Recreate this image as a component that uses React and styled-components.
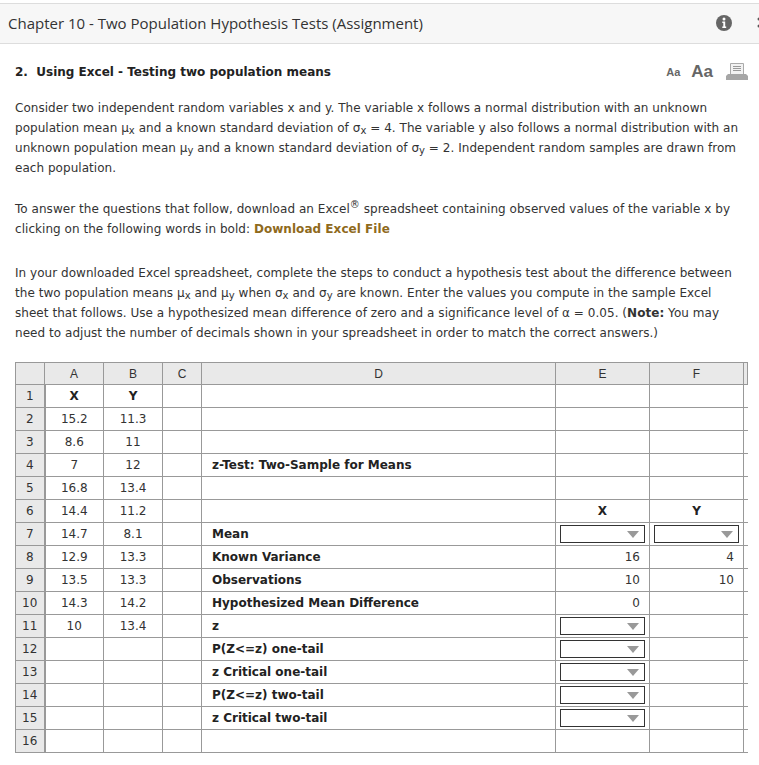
import React from "react";
import styled, { createGlobalStyle } from "styled-components";

const GlobalStyle = createGlobalStyle`
  html, body {
    margin: 0;
    padding: 0;
    background: #ffffff;
  }
  body {
    width: 759px;
    height: 765px;
    overflow: hidden;
    font-family: "DejaVu Sans", Verdana, sans-serif;
    color: #333333;
  }
`;

const Page = styled.div`
  width: 759px;
  padding-top: 3px;
  overflow: hidden;
`;

const TitleBar = styled.header`
  box-sizing: border-box;
  width: 759px;
  height: 41px;
  display: flex;
  align-items: center;
  justify-content: space-between;
  padding: 0 0 2px 8px;
  background: #f7f7f7;
  border-top: 1px solid #dddddd;
  border-bottom: 1px solid #dddddd;
`;

const Title = styled.h1`
  margin: 0;
  font-family: "Open Sans", sans-serif;
  font-size: 15px;
  font-weight: 400;
  color: #333333;
  white-space: nowrap;
`;

const BarTools = styled.div`
  display: flex;
  align-items: center;
  gap: 25px;
  margin-right: -2px;
`;

const Content = styled.main`
  padding: 18px 15px 0;
`;

const QuestionHead = styled.div`
  display: flex;
  align-items: center;
  justify-content: space-between;
  height: 20px;
  margin-bottom: 16px;
`;

const QuestionTitle = styled.h2`
  margin: 0;
  font-size: 12px;
  font-weight: 700;
  color: #222222;
  white-space: pre;
`;

const FontTools = styled.div`
  display: flex;
  align-items: center;
  margin-right: -4px;
  font-weight: 700;
  color: #666666;
`;

const FontSize = styled.span`
  font-family: "Liberation Sans", Arial, sans-serif;
  font-size: ${(p) => p.$size}px;
  margin-right: ${(p) => p.$gap}px;
`;

const Para = styled.p`
  margin: 0 0 ${(p) => p.$after}px;
  font-size: 12px;
  line-height: 20px;
  letter-spacing: 0.04px;
  color: #333333;
  white-space: nowrap;
`;

const Sub = styled.sub`
  font-size: 10px;
  line-height: 0;
  vertical-align: -2px;
`;

const DownloadLink = styled.a`
  font-weight: 700;
  color: #8f6a1c;
`;

const Reg = styled.sup`
  font-size: 10px;
  line-height: 0;
`;

const SheetWrap = styled.div`
  margin-top: 19px;
`;

const Sheet = styled.table`
  table-layout: fixed;
  width: 733px;
  border-collapse: collapse;
  font-size: 12px;
  color: #333333;
`;

const HeadCell = styled.th`
  height: 21px;
  padding: 0;
  font-family: "Liberation Sans", Arial, sans-serif;
  font-size: 12px;
  font-weight: 400;
  text-align: center;
  background: #e9e9e9;
  border: 1px solid #999999;
`;

const RowHead = styled.td`
  height: 22px;
  padding: 0;
  text-align: center;
  background: #e9e9e9;
  border: 1px solid #999999;
  border-right-width: 2px;
`;

const Cell = styled.td`
  height: 22px;
  padding: ${(p) => (p.$align === "left" ? "0 0 0 10px" : p.$align === "right" ? "0 9px 0 0" : "0")};
  text-align: ${(p) => p.$align || "center"};
  font-weight: ${(p) => (p.$bold ? 700 : 400)};
  color: ${(p) => (p.$bold ? "#222222" : "#333333")};
  border: 1px solid #999999;
  white-space: nowrap;
`;

const EdgeCell = styled.td`
  padding: 0;
  border-top: 1px solid #999999;
  border-bottom: 1px solid #999999;
`;

const DropBox = styled.div`
  box-sizing: border-box;
  width: 85px;
  height: 18px;
  margin: 0 0 0 4px;
  display: flex;
  align-items: center;
  justify-content: flex-end;
  padding-right: 5px;
  border: 1px solid #333333;
  background: #ffffff;
`;

const Caret = styled.span`
  width: 0;
  height: 0;
  border-left: 6px solid transparent;
  border-right: 6px solid transparent;
  border-top: 7px solid #999999;
`;

const InfoIcon = () => (
  <svg width="16" height="16" viewBox="0 0 16 16" aria-hidden="true">
    <circle cx="8" cy="8" r="8" fill="#666666" />
    <circle cx="8" cy="4" r="1.5" fill="#ffffff" />
    <path d="M6.3 6.6h2.9v5h1v1.3H6.3v-1.3h1v-3.7h-1z" fill="#ffffff" />
  </svg>
);

const DotsIcon = () => (
  <svg width="4" height="14" viewBox="0 0 4 14" aria-hidden="true">
    <circle cx="2" cy="3" r="1.5" fill="#555555" />
    <circle cx="2" cy="10" r="1.5" fill="#555555" />
  </svg>
);

const PrinterIcon = () => (
  <svg width="22" height="18" viewBox="0 0 22 18" aria-hidden="true">
    <path d="M4.5 .5h13v11h-13z" fill="#f2f2f2" stroke="#aaaaaa" />
    <path d="M7 3.5h8M7 5.5h8M7 7.5h8" stroke="#999999" />
    <path d="M2 11h18l2 2v4H0v-4z" fill="#a6a6a6" />
  </svg>
);

const rows = [
  ["X", "Y", "", "", null, null],
  ["15.2", "11.3"],
  ["8.6", "11"],
  ["7", "12", "", "z-Test: Two-Sample for Means"],
  ["16.8", "13.4"],
  ["14.4", "11.2", "", "", "X", "Y"],
  ["14.7", "8.1", "", "Mean", "drop", "drop"],
  ["12.9", "13.3", "", "Known Variance", "16", "4"],
  ["13.5", "13.3", "", "Observations", "10", "10"],
  ["14.3", "14.2", "", "Hypothesized Mean Difference", "0", ""],
  ["10", "13.4", "", "z", "drop", ""],
  ["", "", "", "P(Z<=z) one-tail", "drop", ""],
  ["", "", "", "z Critical one-tail", "drop", ""],
  ["", "", "", "P(Z<=z) two-tail", "drop", ""],
  ["", "", "", "z Critical two-tail", "drop", ""],
  [],
];

const Dropdown = () => (
  <DropBox>
    <Caret />
  </DropBox>
);

const ResultCell = ({ value, index }) => {
  if (value === "drop") {
    return (
      <Cell>
        <Dropdown />
      </Cell>
    );
  }
  // the header row of the result block is centred and bold, numbers sit on the right
  if (index === 5) return <Cell $bold>{value}</Cell>;
  return <Cell $align="right">{value}</Cell>;
};

export default function App() {
  return (
    <Page>
      <GlobalStyle />
      <TitleBar>
        <Title>Chapter 10 - Two Population Hypothesis Tests (Assignment)</Title>
        <BarTools>
          <InfoIcon />
          <DotsIcon />
        </BarTools>
      </TitleBar>
      <Content>
        <QuestionHead>
          <QuestionTitle>2.  Using Excel - Testing two population means</QuestionTitle>
          <FontTools>
            <FontSize $size={11} $gap={11}>Aa</FontSize>
            <FontSize $size={17} $gap={13}>Aa</FontSize>
            <PrinterIcon />
          </FontTools>
        </QuestionHead>
        <Para $after={21}>
          Consider two independent random variables x and y. The variable x follows a normal distribution with an unknown
          <br />
          population mean μ<Sub>x</Sub> and a known standard deviation of σ<Sub>x</Sub> = 4. The variable y also follows a normal distribution with an
          <br />
          unknown population mean μ<Sub>y</Sub> and a known standard deviation of σ<Sub>y</Sub> = 2. Independent random samples are drawn from
          <br />
          each population.
        </Para>
        <Para $after={24}>
          To answer the questions that follow, download an Excel<Reg>®</Reg> spreadsheet containing observed values of the variable x by
          <br />
          clicking on the following words in bold: <DownloadLink>Download Excel File</DownloadLink>
        </Para>
        <Para $after={0}>
          In your downloaded Excel spreadsheet, complete the steps to conduct a hypothesis test about the difference between
          <br />
          the two population means μ<Sub>x</Sub> and μ<Sub>y</Sub> when σ<Sub>x</Sub> and σ<Sub>y</Sub> are known. Enter the values you compute in the sample Excel
          <br />
          sheet that follows. Use a hypothesized mean difference of zero and a significance level of α = 0.05. (<b>Note:</b> You may
          <br />
          need to adjust the number of decimals shown in your spreadsheet in order to match the correct answers.)
        </Para>
        <SheetWrap>
          <Sheet>
            <colgroup>
              <col style={{ width: 29 }} />
              <col style={{ width: 59 }} />
              <col style={{ width: 59 }} />
              <col style={{ width: 39 }} />
              <col style={{ width: 354 }} />
              <col style={{ width: 94 }} />
              <col style={{ width: 94 }} />
              <col style={{ width: 4 }} />
            </colgroup>
            <thead>
              <tr>
                <HeadCell />
                {["A", "B", "C", "D", "E", "F"].map((c) => (
                  <HeadCell key={c}>{c}</HeadCell>
                ))}
                <HeadCell />
              </tr>
            </thead>
            <tbody>
              {rows.map((r, i) => (
                <tr key={i}>
                  <RowHead>{i + 1}</RowHead>
                  <Cell $bold={i === 0}>{r[0]}</Cell>
                  <Cell $bold={i === 0}>{r[1]}</Cell>
                  <Cell />
                  <Cell $align="left" $bold>{r[3]}</Cell>
                  <ResultCell value={r[4]} index={i} />
                  <ResultCell value={r[5]} index={i} />
                  <EdgeCell />
                </tr>
              ))}
            </tbody>
          </Sheet>
        </SheetWrap>
      </Content>
    </Page>
  );
}
